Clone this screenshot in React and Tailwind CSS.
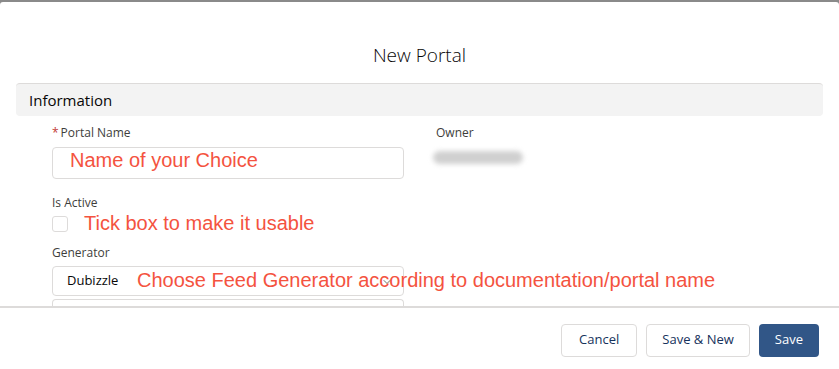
import { ChevronDown } from 'lucide-react';

const sans = 'font-["Open_Sans","Noto_Sans",sans-serif]';
const note = 'font-["Liberation_Sans",Arial,sans-serif] text-[20px] text-[#f4533f] leading-none';

export default function App() {
    return (
        <div className={`w-[839px] h-[369px] bg-[#8a8a8a] pt-[2px] overflow-hidden ${sans}`}>
            <div className="h-full bg-white rounded-t-[3px] flex flex-col">
                {/* Header */}
                <div className="h-[81px] flex items-center justify-center pt-[25px]">
                    <h2 className="text-[19px] font-light text-[#080707]">New Portal</h2>
                </div>

                {/* Body */}
                <div className="flex-1 overflow-hidden px-4">
                    <div className="h-[33px] bg-[#f3f3f3] rounded-[4px] border-t border-[#dddbda] flex items-center px-[13px]">
                        <span className="text-[15px] text-[#080707]">Information</span>
                    </div>

                    <div className="grid grid-cols-[352px_1fr] gap-x-8 pl-9 pt-[8px]">
                        {/* Portal Name */}
                        <div>
                            <label className="block text-[12px] text-[#3e3e3c] leading-[18px]">
                                <span className="text-[#c23934] mr-[2px]">*</span>Portal Name
                            </label>
                            <div className="mt-[5px] h-[32px] border border-[#dddbda] rounded-[4px] flex items-center pl-[17px] pb-[6px]">
                                <span className={note}>Name of your Choice</span>
                            </div>
                        </div>

                        {/* Owner */}
                        <div>
                            <label className="block text-[12px] text-[#3e3e3c] leading-[18px]">Owner</label>
                            <div className="mt-[9px] ml-[-3px] w-[90px] h-[13px] rounded-full bg-[#d0d0d0] blur-[2.5px]" />
                        </div>

                        {/* Is Active */}
                        <div className="col-span-2 pt-[15px]">
                            <label className="block text-[12px] text-[#3e3e3c] leading-[18px]">Is Active</label>
                            <div className="mt-[3px] flex items-center gap-4">
                                <div className="w-4 h-4 border border-[#dddbda] rounded-[3px]" />
                                <span className={`${note} -mt-[2px]`}>Tick box to make it usable</span>
                            </div>
                        </div>

                        {/* Generator */}
                        <div className="col-span-2 pt-[11px]">
                            <label className="block text-[12px] text-[#3e3e3c] leading-[18px]">Generator</label>
                            <div className="relative mt-[4px] w-[352px] h-[30px] border border-[#dddbda] rounded-[4px] flex items-center pl-[14px]">
                                <span className="text-[13px] text-[#080707]">Dubizzle</span>
                                <ChevronDown className="absolute right-[10px] top-[9px] w-3 h-3 text-[#706e6b]" />
                                <span className={`absolute left-[84px] top-[3px] whitespace-nowrap ${note}`}>
                                    Choose Feed Generator according to documentation/portal name
                                </span>
                            </div>
                            <div className="mt-[3px] w-[352px] h-[10px] border-x border-t border-[#dddbda] rounded-t-[4px]" />
                        </div>
                    </div>
                </div>

                {/* Footer */}
                <div className="h-[63px] border-t-2 border-[#dddbda] flex items-center justify-end gap-[9px] pr-5 pt-[3px]">
                    <button className="h-[33px] px-[17px] border border-[#dddbda] rounded-[4px] text-[13px] text-[#16325c] bg-white">Cancel</button>
                    <button className="h-[33px] px-[15px] border border-[#dddbda] rounded-[4px] text-[13px] text-[#16325c] bg-white">Save &amp; New</button>
                    <button className="h-[33px] px-4 rounded-[4px] text-[13px] text-white bg-[#315687]">Save</button>
                </div>
            </div>
        </div>
    );
}
